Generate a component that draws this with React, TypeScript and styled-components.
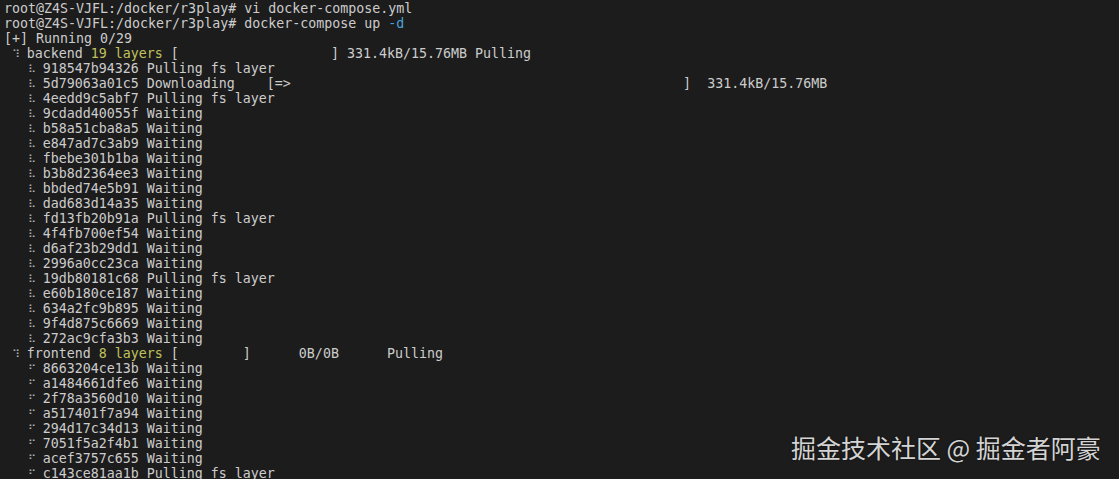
import React from "react";
import styled, { createGlobalStyle } from "styled-components";

const Global = createGlobalStyle`
  html, body { margin: 0; padding: 0; background: #1c1c1c; }
  body { width: 1119px; height: 479px; overflow: hidden; }
`;

const Screen = styled.div`
  position: relative;
  width: 1119px;
  height: 479px;
  background: #1c1c1c;
  overflow: hidden;
`;

const Terminal = styled.pre`
  margin: 0;
  padding: 1px 0 0 4px;
  font-family: "DejaVu Sans Mono", "Liberation Mono", monospace;
  font-size: 13.3px;
  line-height: 15px;
  color: #cccccc;
  white-space: pre;
`;

const Line = styled.div`
  height: 15px;
`;

const Yellow = styled.span`
  color: #c1c15c;
`;

const Cyan = styled.span`
  color: #4aa3d8;
`;

const Spin = styled.span`
  display: inline-block;
  width: 1ch;
  overflow: visible;
  color: #b0b0b0;
  font-size: 11px;
`;

const Watermark = styled.div`
  position: absolute;
  left: 791px;
  top: 431px;
  font-family: "Noto Sans CJK SC", "Noto Sans", sans-serif;
  font-size: 25px;
  line-height: 32px;
  color: #d4d4d4;
  text-shadow: 0 0 2px rgba(0, 0, 0, 0.6);
  white-space: nowrap;
`;

const backendLayers: [string, string][] = [
  ["918547b94326", "Pulling fs layer"],
  ["5d79063a01c5", "Downloading    [=>" + " ".repeat(49) + "]  331.4kB/15.76MB"],
  ["4eedd9c5abf7", "Pulling fs layer"],
  ["9cdadd40055f", "Waiting"],
  ["b58a51cba8a5", "Waiting"],
  ["e847ad7c3ab9", "Waiting"],
  ["fbebe301b1ba", "Waiting"],
  ["b3b8d2364ee3", "Waiting"],
  ["bbded74e5b91", "Waiting"],
  ["dad683d14a35", "Waiting"],
  ["fd13fb20b91a", "Pulling fs layer"],
  ["4f4fb700ef54", "Waiting"],
  ["d6af23b29dd1", "Waiting"],
  ["2996a0cc23ca", "Waiting"],
  ["19db80181c68", "Pulling fs layer"],
  ["e60b180ce187", "Waiting"],
  ["634a2fc9b895", "Waiting"],
  ["9f4d875c6669", "Waiting"],
  ["272ac9cfa3b3", "Waiting"],
];

const frontendLayers: [string, string][] = [
  ["8663204ce13b", "Waiting"],
  ["a1484661dfe6", "Waiting"],
  ["2f78a3560d10", "Waiting"],
  ["a517401f7a94", "Waiting"],
  ["294d17c34d13", "Waiting"],
  ["7051f5a2f4b1", "Waiting"],
  ["acef3757c655", "Waiting"],
  ["c143ce81aa1b", "Pulling fs layer"],
];

export default function App() {
  return (
    <Screen>
      <Global />
      <Terminal>
        <Line>root@Z4S-VJFL:/docker/r3play# vi docker-compose.yml</Line>
        <Line>
          root@Z4S-VJFL:/docker/r3play# docker-compose up <Cyan>-d</Cyan>
        </Line>
        <Line>[+] Running 0/29</Line>
        <Line>
          {" "}
          <Spin>⠹</Spin> backend <Yellow>19 layers</Yellow> [{" ".repeat(19)}] 331.4kB/15.76MB Pulling
        </Line>
        {backendLayers.map(([id, status]) => (
          <Line key={id}>
            {"   "}
            <Spin>⠧</Spin> {id} {status}
          </Line>
        ))}
        <Line>
          {" "}
          <Spin>⠹</Spin> frontend <Yellow>8 layers</Yellow> [{" ".repeat(8)}]{"      "}0B/0B{"      "}Pulling
        </Line>
        {frontendLayers.map(([id, status]) => (
          <Line key={id}>
            {"   "}
            <Spin>⠋</Spin> {id} {status}
          </Line>
        ))}
      </Terminal>
      <Watermark>掘金技术社区 @ 掘金者阿豪</Watermark>
    </Screen>
  );
}
